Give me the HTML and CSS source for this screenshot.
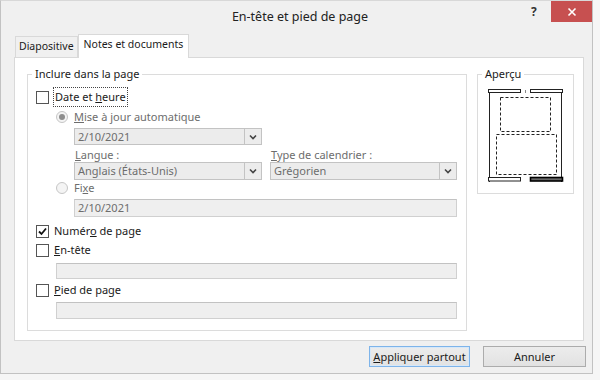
FILE: index.html
```html
<!DOCTYPE html>
<html lang="fr">
<head>
<meta charset="utf-8">
<title>En-tête et pied de page</title>
<link rel="stylesheet" href="styles.css">
</head>
<body>
<div class="dialog">
  <div class="titlebar">
    <div class="title">En-tête et pied de page</div>
    <div class="help">?</div>
    <div class="close">
      <svg width="10" height="10" viewBox="0 0 10 10"><path d="M1.5 1.5 L8.5 8.5 M8.5 1.5 L1.5 8.5" stroke="#fff" stroke-width="1.6" fill="none"/></svg>
    </div>
  </div>
  <div class="tabs">
    <div class="tab">Diapositive</div>
    <div class="tab active">Notes et documents</div>
  </div>
  <div class="panel">
    <div class="group include">
      <div class="legend">Inclure dans la page</div>
      <div class="row row-date">
        <span class="check"></span>
        <span class="focus">Date et <u>h</u>eure</span>
      </div>
      <div class="row row-radio r1">
        <span class="radio selected"></span>
        <span class="dis"><u>M</u>ise à jour automatique</span>
      </div>
      <div class="select sel1">
        <span class="sel-text">2/10/2021</span>
        <span class="sel-btn"><svg width="8" height="6" viewBox="0 0 8 6"><path d="M1 1.5 L4 4.5 L7 1.5" stroke="#444" stroke-width="1.6" fill="none"/></svg></span>
      </div>
      <div class="two-col">
        <div class="col">
          <div class="sublabel"><u>L</u>angue :</div>
          <div class="select tall">
            <span class="sel-text">Anglais (États-Unis)</span>
            <span class="sel-btn"><svg width="8" height="6" viewBox="0 0 8 6"><path d="M1 1.5 L4 4.5 L7 1.5" stroke="#444" stroke-width="1.6" fill="none"/></svg></span>
          </div>
        </div>
        <div class="col col2">
          <div class="sublabel"><u>T</u>ype de calendrier :</div>
          <div class="select tall">
            <span class="sel-text">Grégorien</span>
            <span class="sel-btn"><svg width="8" height="6" viewBox="0 0 8 6"><path d="M1 1.5 L4 4.5 L7 1.5" stroke="#444" stroke-width="1.6" fill="none"/></svg></span>
          </div>
        </div>
      </div>
      <div class="row row-radio r2">
        <span class="radio"></span>
        <span class="dis">Fi<u>x</u>e</span>
      </div>
      <div class="input input-fixe">2/10/2021</div>
      <div class="row row-num">
        <span class="check checked"><svg width="11" height="11" viewBox="0 0 11 11"><path d="M2 5.5 L4.5 8 L9 2.5" stroke="#111" stroke-width="1.8" fill="none"/></svg></span>
        <span>Numér<u>o</u> de page</span>
      </div>
      <div class="row row-ent">
        <span class="check"></span>
        <span><u>E</u>n-tête</span>
      </div>
      <div class="input input-wide i1"></div>
      <div class="row row-pied">
        <span class="check"></span>
        <span><u>P</u>ied de page</span>
      </div>
      <div class="input input-wide i2"></div>
    </div>
    <div class="group preview">
      <div class="legend">Aperçu</div>
      <svg class="preview-svg" width="78" height="96" viewBox="0 0 78 96">
        <line x1="2.5" y1="2" x2="2.5" y2="94" stroke="#222" stroke-width="1"/>
        <line x1="74.5" y1="2" x2="74.5" y2="94" stroke="#222" stroke-width="1"/>
        <rect x="1.5" y="1.5" width="32" height="3" fill="#fff" stroke="#222" stroke-width="1"/>
        <rect x="43.5" y="1.5" width="32" height="3" fill="#fff" stroke="#222" stroke-width="1"/>
        <line x1="38.5" y1="2" x2="38.5" y2="5" stroke="#888" stroke-width="1"/>
        <rect x="13.5" y="9.5" width="50" height="34" fill="none" stroke="#222" stroke-width="1" stroke-dasharray="3 2"/>
        <rect x="9.5" y="46.5" width="60" height="40" fill="none" stroke="#222" stroke-width="1" stroke-dasharray="3 2"/>
        <rect x="1.5" y="89.5" width="32" height="3.5" fill="#fff" stroke="#222" stroke-width="1"/>
        <rect x="43.5" y="89.5" width="32" height="3.5" fill="#666" stroke="#000" stroke-width="1.6"/>
      </svg>
    </div>
  </div>
  <div class="buttons">
    <div class="btn default"><u>A</u>ppliquer partout</div>
    <div class="btn">Annuler</div>
  </div>
</div>
</body>
</html>
```
FILE: styles.css
```css
* { box-sizing: border-box; }
html, body { margin: 0; padding: 0; }
body {
  background: #f6f6f6;
  width: 600px;
  height: 380px;
  overflow: hidden;
  font-family: "Noto Sans", "Open Sans", sans-serif;
  font-size: 11px;
  color: #1a1a1a;
}
u { text-decoration: underline; text-underline-offset: 1px; }

.dialog {
  width: 593px;
  height: 374px;
  background: #f0f0f0;
  border: 1px solid #c2c2c2;
  border-top-color: #d8d8d8;
  display: flex;
  flex-direction: column;
}

.titlebar {
  height: 31px;
  display: flex;
  align-items: flex-start;
}
.title {
  flex: 1;
  text-align: center;
  font-size: 12.5px;
  color: #222;
  padding-left: 68px;
  padding-top: 7px;
  line-height: 17px;
}
.help {
  width: 14px;
  margin-top: 3px;
  margin-right: 6px;
  font-weight: bold;
  font-size: 12px;
  color: #333;
  line-height: 16px;
}
.close {
  width: 41px;
  height: 21px;
  background: #c75050;
  display: flex;
  align-items: center;
  justify-content: center;
}

.tabs {
  display: flex;
  align-items: flex-end;
  padding-left: 14px;
  height: 24px;
  margin-top: 1px;
}
.tab {
  height: 21px;
  padding: 0 3px;
  border: 1px solid #d9d9d9;
  border-bottom: none;
  background: #f0f0f0;
  line-height: 19px;
  color: #1a1a1a;
  white-space: nowrap;
  font-size: 10.5px;
}
.tab.active {
  height: 24px;
  background: #fff;
  padding: 0 5px;
  line-height: 19px;
  position: relative;
  margin-bottom: -1px;
  z-index: 1;
}

.panel {
  margin-left: 13px;
  width: 570px;
  height: 284px;
  background: #fff;
  border: 1px solid #d9d9d9;
  display: flex;
  align-items: flex-start;
  padding-top: 16px;
  padding-left: 12px;
}

.group {
  border: 1px solid #dcdcdc;
  display: flex;
  flex-direction: column;
}
.legend {
  margin-top: -8px;
  margin-left: 4px;
  padding: 0 3px;
  background: #fff;
  align-self: flex-start;
  line-height: 14px;
  height: 14px;
  color: #1a1a1a;
  white-space: nowrap;
}
.include {
  width: 440px;
  height: 257px;
}
.preview {
  width: 97px;
  height: 120px;
  margin-left: 10px;
}
.preview-svg {
  margin-top: 7px;
  margin-left: 9px;
  display: block;
}

.row {
  display: flex;
  align-items: center;
  height: 18px;
  line-height: 14px;
  white-space: nowrap;
}
.check {
  width: 13px;
  height: 13px;
  border: 1px solid #555;
  background: #fff;
  margin-left: 8px;
  margin-right: 5px;
  display: flex;
  align-items: center;
  justify-content: center;
  flex: none;
}
.check svg { display: block; }
.focus {
  outline: 1px dotted #444;
  outline-offset: 0;
  padding: 2px 1px 2px 1px;
  line-height: 14px;
}
.row-date { margin-top: 7px; }
.row-radio { height: 16px; }
.r1 { margin-top: 3px; }
.r2 { margin-top: 0; }
.radio {
  width: 12px;
  height: 12px;
  border-radius: 50%;
  border: 1px solid #c6c6c6;
  background: #f4f4f4;
  margin-left: 28px;
  margin-right: 6px;
  display: flex;
  align-items: center;
  justify-content: center;
  flex: none;
}
.radio.selected::after {
  content: "";
  width: 6px;
  height: 6px;
  border-radius: 50%;
  background: #8e8e8e;
}
.dis { color: #6d6d6d; }

.select {
  height: 17px;
  border: 1px solid #c3c3c3;
  background: #ececec;
  display: flex;
  align-items: stretch;
  color: #6d6d6d;
  white-space: nowrap;
}
.select.tall { height: 18px; }
.sel-text {
  flex: 1;
  padding-left: 3px;
  line-height: 15px;
}
.select.tall .sel-text { line-height: 16px; }
.sel-btn {
  width: 17px;
  border-left: 1px solid #c3c3c3;
  display: flex;
  align-items: center;
  justify-content: center;
}
.sel1 {
  margin-top: 3px;
  margin-left: 46px;
  width: 188px;
}
.two-col {
  display: flex;
  margin-left: 46px;
  margin-top: 3px;
}
.col { width: 188px; }
.col2 { margin-left: 8px; width: 187px; }
.sublabel {
  height: 14px;
  line-height: 14px;
  color: #6d6d6d;
  padding-left: 1px;
  white-space: nowrap;
}

.input {
  height: 17px;
  border: 1px solid #d0d0d0;
  border-top-color: #c2c2c2;
  background: #efefef;
  color: #6d6d6d;
  line-height: 15px;
  padding-left: 3px;
}
.input-fixe {
  margin-top: 3px;
  margin-left: 46px;
  width: 383px;
  height: 18px;
  line-height: 16px;
}
.input-wide {
  margin-left: 28px;
  width: 401px;
  height: 16px;
}
.row-num { margin-top: 5px; }
.row-ent { margin-top: 1px; }
.i1 { margin-top: 4px; }
.row-pied { margin-top: 2px; }
.i2 { margin-top: 3px; height: 17px; }

.buttons {
  display: flex;
  justify-content: flex-end;
  gap: 13px;
  padding-right: 6px;
  margin-top: 5px;
}
.btn {
  height: 21px;
  width: 103px;
  border: 1px solid #acacac;
  background: linear-gradient(#ececec, #e2e2e2);
  text-align: center;
  line-height: 19px;
  color: #1a1a1a;
  white-space: nowrap;
}
.btn.default {
  width: 101px;
  border-color: #7eb4ea;
  box-shadow: inset 0 0 0 1px #d6e8f9;
}
```
